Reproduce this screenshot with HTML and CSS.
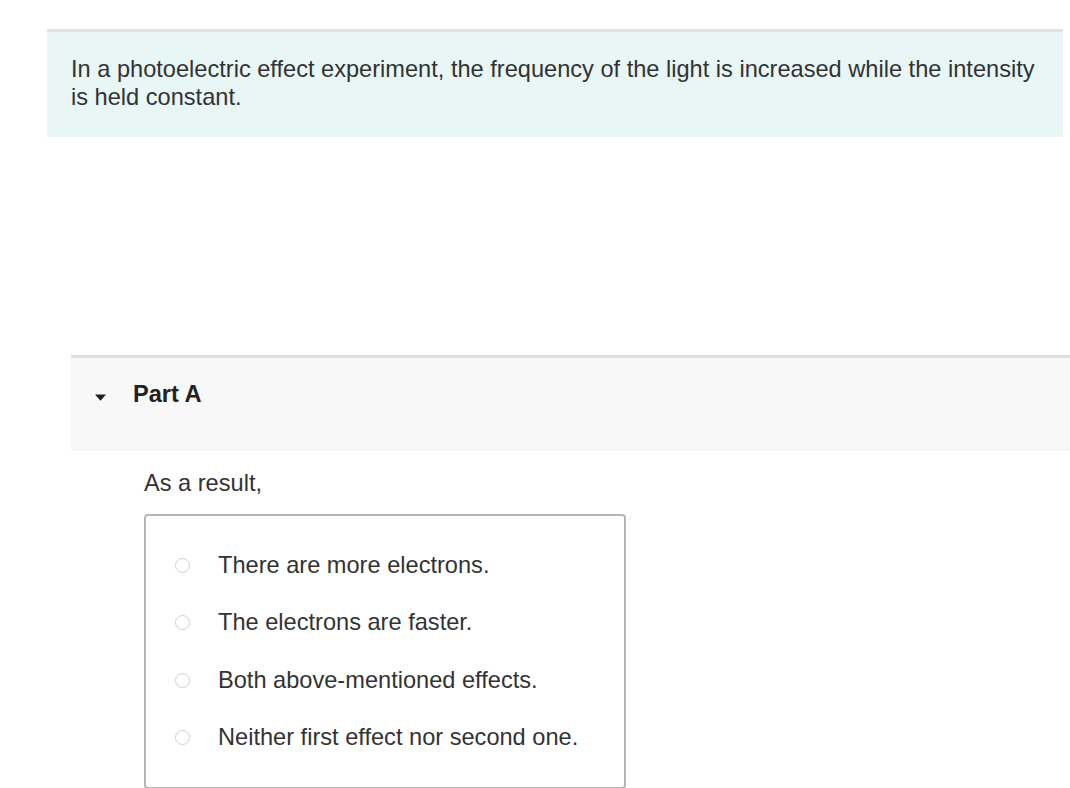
FILE: index.html
```html
<!DOCTYPE html>
<html>
<head>
<meta charset="utf-8">
<link rel="stylesheet" href="styles.css">
</head>
<body>
<div class="page">
  <div class="intro">
    <p>In a photoelectric effect experiment, the frequency of the light is increased while the intensity is held constant.</p>
  </div>
  <div class="part">
    <div class="part-header">
      <svg class="caret" width="11" height="7" viewBox="0 0 11 7"><polygon points="0,0.5 11,0.5 5.5,6.8" fill="#222"/></svg>
      <span class="part-title">Part A</span>
    </div>
    <div class="part-body">
      <p class="prompt">As a result,</p>
      <div class="choices">
        <label class="choice"><span class="radio"></span><span>There are more electrons.</span></label>
        <label class="choice"><span class="radio"></span><span>The electrons are faster.</span></label>
        <label class="choice"><span class="radio"></span><span>Both above-mentioned effects.</span></label>
        <label class="choice"><span class="radio"></span><span>Neither first effect nor second one.</span></label>
      </div>
    </div>
  </div>
</div>
</body>
</html>
```
FILE: styles.css
```css
html, body {
  margin: 0;
  padding: 0;
  background: #fff;
}
body {
  font-family: "Liberation Sans", Arial, Helvetica, sans-serif;
  font-size: 23.6px;
  line-height: 28px;
  color: #333;
  overflow: hidden;
}
p { margin: 0; }
.page {
  padding-top: 29px;
}
.intro {
  margin-left: 47px;
  width: 1016px;
  border-top: 3px solid #e1e3e3;
  background: #e8f6f6;
  padding: 23px 24px 26px 24px;
  box-sizing: border-box;
  height: 108px;
}
.part {
  margin-top: 218px;
  margin-left: 71px;
}
.part-header {
  border-top: 3px solid #e0e0e0;
  background: #f8f8f8;
  height: 71px;
  display: flex;
  align-items: flex-start;
  padding-top: 22px;
}
.caret {
  margin-left: 24px;
  margin-top: 14px;
  flex: none;
}
.part-title {
  font-weight: bold;
  margin-left: 27px;
  color: #222;
}
.part-body {
  padding-left: 73px;
  padding-top: 18px;
}
.prompt {
  margin-bottom: 17px;
}
.choices {
  width: 482px;
  box-sizing: border-box;
  border: 2px solid #b5b5b5;
  border-radius: 4px;
  padding: 35px 0 36px 29px;
  display: flex;
  flex-direction: column;
  gap: 29.3px;
}
.choice {
  display: flex;
  align-items: center;
}
.radio {
  width: 15px;
  height: 15px;
  border: 1px solid #cfcfcf;
  border-radius: 50%;
  box-sizing: border-box;
  margin-right: 28px;
  flex: none;
  background: #fff;
  margin-top: 1px;
}
```
